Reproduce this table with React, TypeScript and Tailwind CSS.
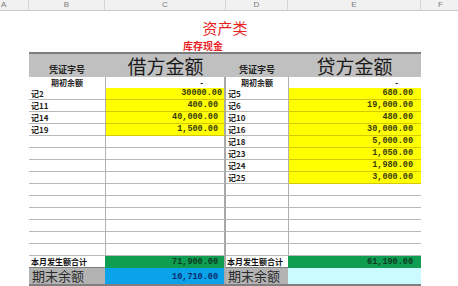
const leftRows: [string, string][] = [
  ['记2', '30000.00'],
  ['记11', '400.00'],
  ['记14', '40,000.00'],
  ['记19', '1,500.00'],
]

const rightRows: [string, string][] = [
  ['记5', '680.00'],
  ['记6', '19,000.00'],
  ['记10', '480.00'],
  ['记16', '30,000.00'],
  ['记18', '5,000.00'],
  ['记23', '1,050.00'],
  ['记24', '1,980.00'],
  ['记25', '3,000.00'],
]

const ROWS = 14

const cols = [
  { label: 'A', w: 'w-[29px]', align: 'justify-start pl-[1px]' },
  { label: 'B', w: 'w-[76px]', align: 'justify-center' },
  { label: 'C', w: 'w-[121px]', align: 'justify-center' },
  { label: 'D', w: 'w-[62px]', align: 'justify-center' },
  { label: 'E', w: 'w-[133px]', align: 'justify-center' },
  { label: 'F', w: 'w-[40px]', align: 'justify-center' },
]

function ColHeader() {
  return (
    <div className="flex h-[11px] bg-[#f1f1f1] border-b border-[#c9c9c9] font-['Liberation_Sans',sans-serif]">
      {cols.map((c) => (
        <div
          key={c.label}
          className={`${c.w} shrink-0 flex items-center ${c.align} border-r border-[#d4d4d4] text-[8px] leading-none text-[#7a7a7a]`}
        >
          {c.label}
        </div>
      ))}
    </div>
  )
}

function Half({ rows, right }: { rows: [string, string][]; right?: boolean }) {
  const labelW = right ? 'w-[62px]' : 'w-[76px]'
  const amtW = right ? 'w-[133px]' : 'w-[121px]'
  const amtPad = right ? 'pr-[8px]' : 'pr-[6px]'
  const edge = right ? '' : 'border-r-2 border-r-[#a8a8a8]'
  const list = Array.from({ length: ROWS }, (_, i) => rows[i])
  return (
    <div className="flex flex-col">
      {list.map((r, i) => (
        <div key={i} className="flex h-[12px]">
          <div
            className={`${labelW} shrink-0 border-b border-[#b8b8b8] pl-[2px] font-['Noto_Sans_CJK_SC',sans-serif] text-[8px] font-bold leading-[11px] text-[#222]`}
          >
            {r ? r[0] : ''}
          </div>
          <div
            className={`${amtW} shrink-0 border-l border-l-[#b0b0b0] ${edge} ${
              r ? 'bg-[#ffff00] border-b border-b-[#d6c800]' : 'border-b border-b-[#b8b8b8]'
            } ${r && r[1] === '30000.00' ? 'pr-[2px]' : amtPad} text-right font-['Liberation_Mono',monospace] text-[8.5px] font-bold leading-[11px] text-[#3a3a10]`}
          >
            {r ? r[1] : ''}
          </div>
        </div>
      ))}
    </div>
  )
}

export default function App() {
  return (
    <div className="w-[458px] h-[286px] overflow-hidden bg-white font-['Noto_Sans_CJK_SC','Noto_Sans',sans-serif]">
      <ColHeader />

      {/* Title */}
      <div className="ml-[29px] w-[392px] h-[41px] flex flex-col">
        <div className="h-[29px] pt-[9px] text-center text-[15px] leading-none text-[#e8231f]">
          资产类
        </div>
        <div className="flex">
          <div className="w-[76px]" />
          <div className="w-[118px] text-right text-[10px] font-bold leading-[12px] text-[#e8231f]">
            库存现金
          </div>
        </div>
      </div>

      <div className="ml-[29px] w-[392px]">
        {/* Header */}
        <div className="flex h-[25px] bg-[#c0c0c0] border-t-2 border-[#7d7d7d]">
          <div className="w-[76px] flex items-end justify-center pb-[3px] text-[9px] font-bold leading-none text-[#222]">
            凭证字号
          </div>
          <div className="w-[121px] flex items-end justify-center pb-[2px] text-[19px] leading-none text-[#1a1a1a]">
            借方金额
          </div>
          <div className="w-[62px] flex items-end justify-center pb-[3px] text-[9px] font-bold leading-none text-[#222]">
            凭证字号
          </div>
          <div className="w-[133px] flex items-end justify-center pb-[2px] text-[19px] leading-none text-[#1a1a1a]">
            贷方金额
          </div>
        </div>

        {/* Opening balance */}
        <div className="flex h-[11px] font-bold">
          <div className="w-[76px] text-center text-[8px] leading-[11px] text-[#222]">期初余额</div>
          <div className="w-[121px] border-l border-[#b0b0b0] border-r-2 border-r-[#a8a8a8] pr-[20px] pt-[2px] text-right font-['Liberation_Mono',monospace] text-[8px] leading-[8px]">
            -
          </div>
          <div className="w-[62px] text-center text-[8px] leading-[11px] text-[#222]">期初余额</div>
          <div className="w-[133px] border-l border-[#b0b0b0] pr-[22px] pt-[2px] text-right font-['Liberation_Mono',monospace] text-[8px] leading-[8px]">
            -
          </div>
        </div>

        {/* Entries */}
        <div className="flex">
          <Half rows={leftRows} />
          <Half rows={rightRows} right />
        </div>

        {/* Monthly total */}
        <div className="flex h-[12px] font-bold">
          <div className="w-[76px] border-b border-[#7d7d7d] pl-[2px] text-[8px] leading-[11px] whitespace-nowrap text-[#111]">
            本月发生额合计
          </div>
          <div className="w-[121px] bg-[#0f9d52] border-r-2 border-r-[#a8a8a8] pr-[6px] text-right font-['Liberation_Mono',monospace] text-[8.5px] leading-[12px] text-[#0b3a1f]">
            71,900.00
          </div>
          <div className="w-[62px] border-b border-[#7d7d7d] pl-[1px] text-[8px] leading-[11px] whitespace-nowrap text-[#111]">
            本月发生额合计
          </div>
          <div className="w-[133px] bg-[#0f9d52] pr-[8px] text-right font-['Liberation_Mono',monospace] text-[8.5px] leading-[12px] text-[#0b3a1f]">
            61,190.00
          </div>
        </div>

        {/* Ending balance */}
        <div className="flex h-[19px] border-b-[3px] border-[#808080]">
          <div className="w-[76px] bg-[#b3b3b3] pl-[3px] text-[13px] leading-[16px] text-[#2a2a2a]">
            期末余额
          </div>
          <div className="w-[121px] bg-[#0aa2e8] border-r-2 border-r-[#a8a8a8] pr-[6px] pt-[3px] text-right font-['Liberation_Mono',monospace] text-[8.5px] font-bold leading-[13px] text-[#0a2a6e]">
            10,710.00
          </div>
          <div className="w-[62px] bg-[#b3b3b3] pl-[2px] text-[13px] leading-[16px] text-[#2a2a2a]">
            期末余额
          </div>
          <div className="w-[133px] bg-[#ccfbff]" />
        </div>
      </div>
    </div>
  )
}
